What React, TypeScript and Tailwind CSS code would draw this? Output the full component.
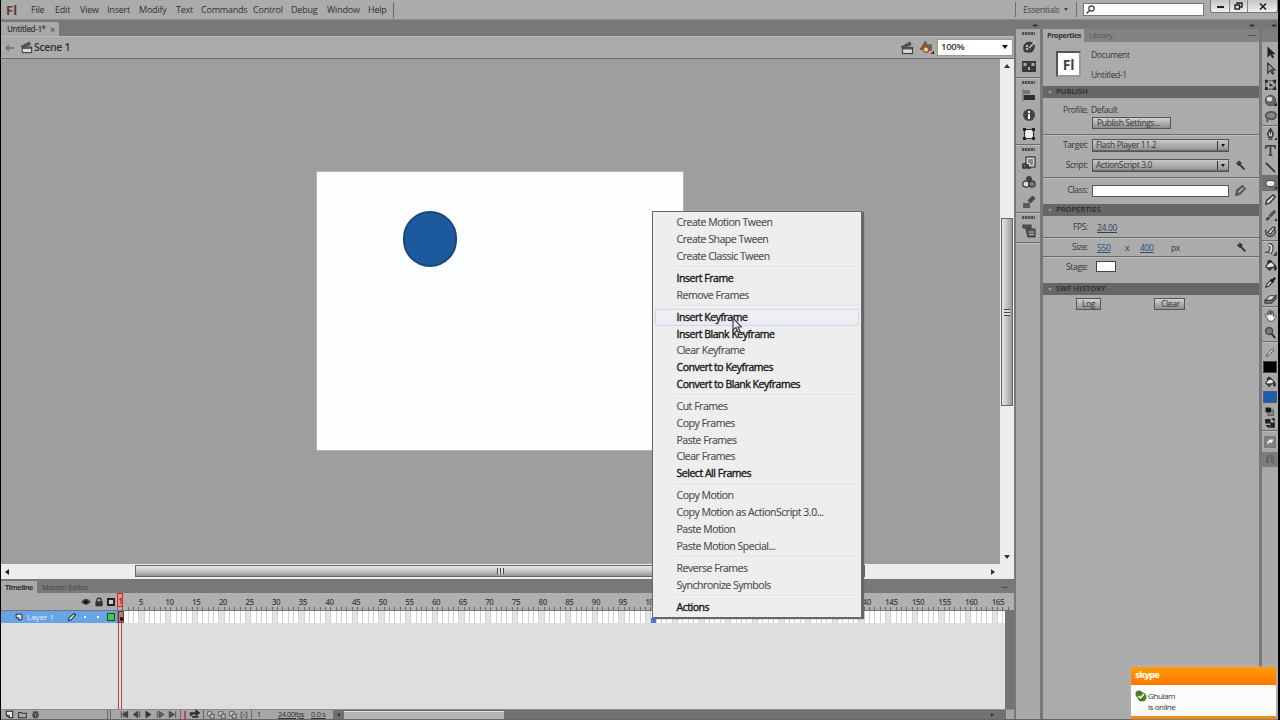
import { Fragment } from "react";
import type { ReactNode } from "react";

const MENUS = [
  { label: "File", w: "w-[24px]" },
  { label: "Edit", w: "w-[25px]" },
  { label: "View", w: "w-[27px]" },
  { label: "Insert", w: "w-[32px]" },
  { label: "Modify", w: "w-[37px]" },
  { label: "Text", w: "w-[25px]" },
  { label: "Commands", w: "w-[52px]" },
  { label: "Control", w: "w-[38px]" },
  { label: "Debug", w: "w-[36px]" },
  { label: "Window", w: "w-[41px]" },
  { label: "Help", w: "w-[25px]" },
];

type MenuEntry = { label: string; off?: boolean; hover?: boolean };

const CONTEXT_GROUPS: MenuEntry[][] = [
  [
    { label: "Create Motion Tween", off: true },
    { label: "Create Shape Tween", off: true },
    { label: "Create Classic Tween", off: true },
  ],
  [{ label: "Insert Frame" }, { label: "Remove Frames", off: true }],
  [
    { label: "Insert Keyframe", hover: true },
    { label: "Insert Blank Keyframe" },
    { label: "Clear Keyframe", off: true },
    { label: "Convert to Keyframes" },
    { label: "Convert to Blank Keyframes" },
  ],
  [
    { label: "Cut Frames", off: true },
    { label: "Copy Frames", off: true },
    { label: "Paste Frames", off: true },
    { label: "Clear Frames", off: true },
    { label: "Select All Frames" },
  ],
  [
    { label: "Copy Motion", off: true },
    { label: "Copy Motion as ActionScript 3.0...", off: true },
    { label: "Paste Motion", off: true },
    { label: "Paste Motion Special...", off: true },
  ],
  [
    { label: "Reverse Frames", off: true },
    { label: "Synchronize Symbols", off: true },
  ],
  [{ label: "Actions" }],
];

const FRAME_LABELS = Array.from({ length: 33 }, (_, i) => (i + 1) * 5);

const Icon = ({ children, size = 13 }: { children: ReactNode; size?: number }) => (
  <svg width={size} height={size} viewBox="0 0 14 14" fill="none" stroke="#333" strokeWidth="1.2" className="shrink-0">
    {children}
  </svg>
);

const icons: Record<string, ReactNode> = {
  select: <path d="M4 1v11l3-3 2 4 1.500-1-2-3.500h3.500z" fill="#222" stroke="#222" strokeWidth=".5" />,
  subselect: <path d="M4 1v11l3-3 2 4 1.500-1-2-3.500h3.500z" fill="#999" stroke="#333" />,
  transform: (
    <>
      <rect x="2" y="3" width="10" height="9" strokeDasharray="2 1" />
      <path d="M1 2h3v3h-3zM10 2h3v3h-3zM1 10h3v3h-3zM10 10h3v3h-3z" fill="#222" stroke="none" />
      <path d="M6 5l4 4h-4z" fill="#222" stroke="none" />
    </>
  ),
  ball: (
    <>
      <circle cx="7" cy="7" r="5.500" fill="#666" stroke="#555" />
      <ellipse cx="6" cy="5.500" rx="3" ry="2.500" fill="#ddd" stroke="none" />
      <path d="M10 13h4v-4z" fill="#222" stroke="none" />
    </>
  ),
  lasso: (
    <>
      <path d="M3 9C0 5 4 2 8 2s6 3 4 6-6 2-7 1-2 2-1 4" strokeWidth="2" stroke="#555" fill="#888" />
    </>
  ),
  pen: (
    <>
      <path d="M7 1l3 5-1.500 4h-3L4 6z" fill="#ddd" strokeWidth="1.600" />
      <path d="M7 2v5M5 12h4" />
      <path d="M11 13h3v-3z" fill="#222" stroke="none" />
    </>
  ),
  type: <path d="M2 2h10v3M2 2v3M7 2v10M5 12h4" strokeWidth="2" stroke="#444" />,
  line: <path d="M2 2l10 10" strokeWidth="1.800" />,
  oval: (
    <>
      <ellipse cx="7" cy="7" rx="5" ry="3.500" fill="#e8e8e8" stroke="#444" />
      <path d="M11 13h3v-3z" fill="#222" stroke="none" />
    </>
  ),
  pencil: <path d="M2 12l1-4 7-6 2 2-6 7z" fill="#ddd" strokeWidth="1.500" />,
  brush: (
    <>
      <path d="M12 2L6 8" strokeWidth="3.500" stroke="#555" />
      <path d="M2 12c0-3 2-4 4-4 1 3-1 5-4 4z" fill="#444" stroke="none" />
      <path d="M11 13h3v-3z" fill="#222" stroke="none" />
    </>
  ),
  deco: (
    <>
      <path d="M2 5c-1 5 2 8 6 7s5-5 3-8" strokeWidth="2" stroke="#555" />
      <path d="M4 8l6-6 2 1-5 7z" fill="#ddd" />
    </>
  ),
  bone: (
    <>
      <path d="M5 2c4 0 4 5 1 9" strokeWidth="4.500" stroke="#444" />
      <path d="M5 2c4 0 4 5 1 9" strokeWidth="2" stroke="#ddd" />
      <path d="M1 10h5M11 13h3v-3z" />
    </>
  ),
  bucket: (
    <>
      <path d="M2 8l5-6 5 5-6 5z" fill="#e8e8e8" />
      <path d="M4 5C3 1 8 0 8 4M12 7c2 3 1 5 0 5s-1-3 0-5" fill="#333" />
      <path d="M2 9l9-1-5 5z" fill="#444" stroke="none" />
    </>
  ),
  dropper: (
    <>
      <path d="M2 12l1-3 5-5 2 2-5 5z" fill="#ddd" />
      <path d="M7 4l3 3M9 5l3-3" strokeWidth="2.600" stroke="#222" />
    </>
  ),
  eraser: (
    <>
      <path d="M1 9l5-5h7l-5 5z" fill="#ddd" stroke="#444" />
      <path d="M1 9v3h7l5-5V4L8 9z" fill="#777" stroke="#444" />
    </>
  ),
  hand: <path d="M3 8L1 5l1-1 2 2V2h1.500v3V1H7v4V1h1.500v4V2H10v5l2-2 1 1-3 6H5z" fill="#f4f4f4" strokeWidth=".8" />,
  zoom: (
    <>
      <circle cx="5.500" cy="5.500" r="3.800" fill="#777" stroke="#444" />
      <path d="M8 8l4 5" strokeWidth="2.200" />
    </>
  ),
  smallPencil: <path d="M3 11l1-3 6-6 1.500 1.500-6 6z" fill="#eee" strokeWidth="1" />,
  swap: <path d="M2 3h5v4H2zM8 7h4v5H8zM9 2h3v3M2 10h4v3" fill="#222" stroke="#222" />,
  bw: (
    <>
      <rect x="5" y="5" width="7" height="7" fill="#888" stroke="#555" />
      <rect x="2" y="2" width="7" height="6" fill="#111" stroke="none" />
    </>
  ),
  objDraw: (
    <>
      <rect x="1" y="1" width="12" height="12" fill="#858585" stroke="#6a6a6a" />
      <path d="M4 10V7l3-3h4L9 8H6z" fill="#f2f2f2" stroke="none" />
    </>
  ),
  snap: <path d="M3 12V6c0-5 8-5 8 0v6M5 12V6c0-2 4-2 4 0v6" stroke="#5c5c5c" />,
  palette: (
    <>
      <path d="M2 9C1 4 6 1 10 3s2 9-3 9-5-1-5-3z" fill="#444" stroke="#333" />
      <circle cx="5" cy="6" r="1" fill="#ddd" stroke="none" />
      <circle cx="5" cy="9" r="1" fill="#ddd" stroke="none" />
      <path d="M7 8l6-6" stroke="#ccc" />
    </>
  ),
  swatches: (
    <>
      <rect x="0" y="2" width="14" height="11" fill="#3a3a3a" stroke="none" />
      <path d="M1.500 4h3v3h-3zM6 8h2v3H6zM9.500 4h3v3h-3z" fill="#aaa" stroke="none" />
    </>
  ),
  align: (
    <>
      <path d="M1 1v12" stroke="#666" />
      <path d="M2 2h6v4H2z" fill="#777" stroke="none" />
      <path d="M2 7h11v5H2z" fill="#2d2d2d" stroke="none" />
    </>
  ),
  info: (
    <>
      <circle cx="7" cy="7" r="6" fill="#444" stroke="none" />
      <path d="M7 3v2M7 6v5" stroke="#fff" strokeWidth="2" />
    </>
  ),
  box: (
    <>
      <path d="M2.500 2.500h9v9h-9z" fill="#eee" />
      <path d="M1 1h3v3H1zM10 1h3v3h-3zM1 10h3v3H1zM10 10h3v3h-3z" fill="#222" stroke="none" />
    </>
  ),
  code: (
    <>
      <rect x="4" y="1" width="9" height="10" fill="#ddd" />
      <path d="M6 4h5M6 6h5M8 8h3" />
      <path d="M1 8h3v4H1zM6 8v4h3" fill="#777" strokeWidth="1.600" />
    </>
  ),
  component: (
    <>
      <circle cx="7" cy="4" r="3" fill="#444" stroke="none" />
      <circle cx="4" cy="9" r="3.200" fill="#ddd" stroke="#333" />
      <circle cx="10" cy="9" r="3.200" fill="#777" stroke="#333" />
    </>
  ),
  preset: (
    <>
      <path d="M7 7l5-5" strokeWidth="4.500" stroke="#4a4a4a" />
      <path d="M1 8h7v5H1z" fill="#5a5a5a" stroke="none" />
    </>
  ),
  project: (
    <>
      <path d="M1 1h8v3H1zM4 5h9v8H6z" fill="#555" stroke="#444" />
      <path d="M7 8h5M7 10.500h5" stroke="#bbb" />
    </>
  ),
  wrench: (
    <>
      <path d="M5 5l7 7" strokeWidth="2.400" />
      <path d="M2 3.500L5 6l2-2L4 1.500" strokeWidth="2.400" />
    </>
  ),
  edit: (
    <>
      <path d="M2 12l1-5 6-5 3 3-6 6z" fill="#666" stroke="#555" strokeWidth="1.600" />
      <path d="M5 9l5-5" stroke="#ccc" />
    </>
  ),
  clapper: (
    <>
      <path d="M1 6l9-5 1 3-8 2.500z" fill="#55583a" stroke="#444" strokeWidth=".8" />
      <rect x="2.500" y="6.500" width="10" height="6" fill="#ddd" stroke="#444" />
      <path d="M3 7.500h9" strokeWidth="2" stroke="#555" />
    </>
  ),
  symbols: (
    <>
      <path d="M1 9l5-8 3 6z" fill="#5d6a3e" stroke="#444" strokeWidth=".6" />
      <rect x="7" y="4" width="5" height="6" fill="#6e6346" stroke="none" />
      <circle cx="6.500" cy="9" r="2.600" fill="#e9d08c" stroke="#b5452a" />
      <path d="M11 13h3v-3z" fill="#222" stroke="none" />
    </>
  ),
  eye: (
    <>
      <path d="M1 7c3-5 9-5 12 0-3 4-9 4-12 0z" fill="#444" />
      <circle cx="7" cy="7" r="2.500" fill="#111" stroke="none" />
    </>
  ),
  lock: (
    <>
      <path d="M4 7V4c0-3 6-3 6 0v3" strokeWidth="1.800" />
      <rect x="2" y="6" width="10" height="7" fill="#333" stroke="none" />
    </>
  ),
  page: (
    <>
      <path d="M2 2h10v10H7l-5-4z" fill="#e8e8e8" stroke="#222" strokeWidth="1.600" />
      <path d="M2 8h5v4" stroke="#222" />
    </>
  ),
  folder: <path d="M1 4h4l1 1h7v7H1z" fill="#aaa" strokeWidth="1.600" />,
  trash: (
    <>
      <circle cx="7" cy="8" r="4.500" fill="#777" />
      <path d="M3 3h8M5 6v5M9 6v5" strokeWidth="1.600" />
    </>
  ),
  first: <path d="M2 2v10M12 2v10L4 7zM6 2v10" fill="#444" />,
  prev: <path d="M9 2v10L2 7zM12 2v10" fill="#444" />,
  play: <path d="M3 2v10l8-5z" fill="#333" />,
  next: <path d="M2 2v10M5 2v10l7-5z" fill="#666" />,
  last: <path d="M2 2v10l8-5zM12 2v10" fill="#555" />,
  loop: <path d="M2 9V5h9M9 2l4 3-4 3zM4 10h8" fill="#444" strokeWidth="2" />,
  onion: (
    <>
      <rect x="1.500" y="1.500" width="7" height="7" fill="#ddd" />
      <rect x="5.500" y="5.500" width="7" height="7" fill="#bbb" />
    </>
  ),
  markers: <path d="M5 2H2v10h3M9 2h3v10H9M7 5v4" />,
};

const Gripper = () => (
  <div className="h-[3px] w-[13px] bg-[repeating-linear-gradient(90deg,#4e4e4e_0_2px,#8a8a8a_2px_3px)]" />
);

const Rule = () => <div className="h-[2px] w-full shrink-0 border-t border-[#6c6c6c] bg-[#bcbcbc]" />;

const MenuBar = () => (
  <div className="flex h-5 items-center border-b border-[#8a8a8a] bg-[#ababab] text-[9px] font-medium tracking-[-0.2px] text-[#303030]">
    <div className="w-[30px] pl-[5px] text-[13px] font-bold leading-5 tracking-normal text-[#5a3c3c]">Fl</div>
    {MENUS.map((m) => (
      <div key={m.label} className={`${m.w} whitespace-nowrap pt-px`}>
        {m.label}
      </div>
    ))}
    <div className="h-4 w-px bg-[#666]" />
    <div className="ml-auto flex h-full items-center">
      <div className="h-[15px] w-px bg-[#6e6e6e]" />
      <div className="w-[48px] pl-[7px] tracking-[-0.5px] text-[#4c4c4c]">Essentials</div>
      <div className="h-0 w-0 border-x-[2px] border-t-[3px] border-x-transparent border-t-[#444]" />
      <div className="ml-[8px] h-[15px] w-px bg-[#6e6e6e]" />
      <div className="ml-[6px] flex h-[13px] w-[121px] items-center border border-[#777] bg-white pl-[2px]">
        <svg width="9" height="9" viewBox="0 0 9 9" fill="none" stroke="#333" strokeWidth="1.200">
          <circle cx="5.500" cy="3.500" r="2.700" />
          <path d="M3.500 5.500L.5 8.500" />
        </svg>
      </div>
      <div className="ml-[6px] flex h-[13px] w-[68px] self-start rounded-b-[3px] border border-t-0 border-[#777] bg-gradient-to-b from-[#c4c4c4] to-[#f0f0f0]">
        <div className="flex w-[19px] items-center justify-center border-r border-[#888]">
          <div className="mt-[2px] h-[2px] w-[7px] bg-[#222]" />
        </div>
        <div className="flex w-[18px] items-center justify-center border-r border-[#888]">
          <svg width="9" height="8" viewBox="0 0 9 8" fill="none" stroke="#222" strokeWidth="1.400">
            <path d="M3 3V1h5v4H6" />
            <rect x="1" y="3" width="4.500" height="4" />
          </svg>
        </div>
        <div className="flex grow items-center justify-center">
          <svg width="8" height="7" viewBox="0 0 8 7" stroke="#222" strokeWidth="1.600">
            <path d="M1 .5l6 6M7 .5l-6 6" />
          </svg>
        </div>
      </div>
    </div>
  </div>
);

const SceneBar = () => (
  <>
    <div className="flex h-4 items-end bg-[#787878]">
      <div className="flex h-[14px] w-[58px] items-center whitespace-nowrap rounded-tr-[2px] bg-[#a9a9a9] pl-[6px] text-[8px] font-semibold leading-none tracking-[-0.4px] text-[#3a3a3a]">
        <span className="w-[40px]">Untitled-1*</span>
        <span className="pl-[3px] text-[9px] font-normal">×</span>
      </div>
    </div>
    <div className="flex h-[23px] items-center border-b border-t border-b-[#6c6c6c] border-t-[#b9b9b9] bg-[#ababab]">
      <svg width="9" height="8" viewBox="0 0 9 8" className="ml-[4px]">
        <path d="M0 4l4-4v3h5v2H4v3z" fill="#777" />
      </svg>
      <div className="ml-[6px] flex">
        <Icon>{icons.clapper}</Icon>
      </div>
      <div className="ml-px text-[10.5px] font-semibold tracking-[-0.35px] text-[#333]">Scene 1</div>
      <div className="ml-auto flex items-center">
        <Icon size={14}>{icons.clapper}</Icon>
        <div className="w-[5px]" />
        <Icon size={15}>{icons.symbols}</Icon>
        <div className="ml-[3px] flex h-[17px] w-[76px] items-center justify-between border border-[#999] bg-white pb-px pl-[3px] pr-[4px] text-[9.5px] font-semibold tracking-[-0.3px] text-[#333]">
          <span>100%</span>
          <span className="h-0 w-0 border-x-[3px] border-t-4 border-x-transparent border-t-[#111]" />
        </div>
        <div className="w-px" />
      </div>
    </div>
  </>
);

const Stage = () => (
  <div className="flex h-[505px]">
    <div className="grow bg-[#9e9e9e] pl-[315px] pt-[112px]">
      <div className="h-[280px] w-[368px] border border-[#b4b4b4] bg-[#fdfeff] pl-[86px] pt-[39px]">
        <div className="h-[56px] w-[54px] rounded-full border-2 border-[#1c4679] bg-[#1d5a9d]" />
      </div>
    </div>
    <div className="flex w-[14px] flex-col items-center bg-[#ededed]">
      <div className="mt-[5px] h-0 w-0 border-x-[3px] border-b-4 border-x-transparent border-b-[#333]" />
      <div className="mt-[150px] flex h-[188px] w-[12px] items-center justify-center border border-[#666] bg-gradient-to-r from-[#e6e6e6] via-[#c2c2c2] to-[#979797]">
        <div className="h-[7px] w-[6px] bg-[repeating-linear-gradient(180deg,#444_0_1px,#ddd_1px_3px)]" />
      </div>
      <div className="mt-[149px] h-0 w-0 border-x-[3px] border-t-4 border-x-transparent border-t-[#333]" />
    </div>
  </div>
);

const HScroll = () => (
  <div className="flex h-[15px] items-start bg-[#ededed]">
    <div className="ml-[4px] mt-[5px] h-0 w-0 border-y-[3px] border-r-4 border-y-transparent border-r-[#222]" />
    <div className="ml-[126px] mt-px flex h-[12px] w-[730px] items-center justify-center border border-[#666] bg-gradient-to-b from-[#e8e8e8] via-[#c9c9c9] to-[#949494]">
      <div className="h-[6px] w-[7px] bg-[repeating-linear-gradient(90deg,#444_0_1px,#ddd_1px_3px)]" />
    </div>
    <div className="ml-[126px] mt-[5px] h-0 w-0 border-y-[3px] border-l-4 border-y-transparent border-l-[#333]" />
  </div>
);

const TimelineHeader = () => (
  <div className="flex h-[18px] border-b border-[#777] bg-[#ababab]">
    <div className="flex w-[116px] items-center justify-end gap-[3px] pr-px">
      <Icon size={10}>{icons.eye}</Icon>
      <Icon size={10}>{icons.lock}</Icon>
      <div className="h-[8px] w-[8px] border-2 border-[#222] bg-[#ccc]" />
    </div>
    <div className="flex grow flex-col overflow-hidden bg-[#b0b0b0]">
      <div className="flex h-[14px] items-end whitespace-nowrap pl-px text-[8px] font-semibold leading-[11px] tracking-[-0.4px] text-[#444]">
        <div className="flex w-[21.333px] shrink-0">
          <div className="flex h-[14px] w-[6px] items-end justify-center border border-[#c62d2d] bg-[#f08c84] text-[#8c1a1a]">1</div>
        </div>
        {FRAME_LABELS.map((n) => (
          <div key={n} className="w-[26.667px] shrink-0">
            {/* 105-135 sit entirely behind the open menu */}
            {n > 100 && n < 140 ? null : n}
          </div>
        ))}
      </div>
      <div className="ml-px h-[3px] bg-[repeating-linear-gradient(90deg,#666_0_1px,transparent_1px_5.333px)]" />
    </div>
    <div className="w-px" />
  </div>
);

const LayerRow = () => (
  <div className="flex h-[12px]">
    <div className="flex w-[116px] items-center bg-[#67a4e6] text-[8px] leading-none text-[#e6f3ff]">
      <div className="ml-[14px] flex">
        <Icon size={8}>{icons.page}</Icon>
      </div>
      <span className="ml-[4px] w-[40px]">Layer 1</span>
      <Icon size={10}>{icons.pencil}</Icon>
      <span className="ml-[7px] h-[2px] w-[2px] bg-white" />
      <span className="ml-[11px] h-[2px] w-[2px] bg-white" />
      <span className="ml-[8px] h-[8px] w-[8px] border border-[#1d4a1d] bg-[#4ac44a]" />
    </div>
    <div className="ml-px flex w-[887px] bg-[repeating-linear-gradient(90deg,transparent_0_4.333px,#d2d2d2_4.333px_5.333px),repeating-linear-gradient(90deg,#fff_0_21.333px,#e4e4e4_21.333px_26.667px)]">
      <div className="flex h-full w-[6px] items-end justify-center border border-[#7c3030] bg-[#ae7e7c] pb-px">
        <div className="h-[4px] w-[3px] rounded-full bg-black" />
      </div>
      {/* selected frame peeks out under the menu corner */}
      <div className="ml-[527px] h-[5px] w-[5px] self-end bg-[#3a80cc]" />
    </div>
    <div className="grow bg-[#747474]" />
  </div>
);

const TimelineFooter = () => (
  <div className="flex h-[10px] items-center border-t border-[#8c8c8c] bg-[#a6a6a6] text-[7.5px] tracking-[-0.3px] text-[#333]">
    <div className="flex w-[110px] items-center gap-[4px] pl-[4px]">
      <Icon size={9}>{icons.page}</Icon>
      <Icon size={9}>{icons.folder}</Icon>
      <Icon size={9}>{icons.trash}</Icon>
      <span className="ml-auto h-[9px] w-[4px] border-x border-[#666]" />
    </div>
    <div className="flex items-center gap-[3px] pl-[9px]">
      <Icon size={9}>{icons.first}</Icon>
      <Icon size={9}>{icons.prev}</Icon>
      <Icon size={9}>{icons.play}</Icon>
      <Icon size={9}>{icons.next}</Icon>
      <Icon size={9}>{icons.last}</Icon>
      <span className="h-[9px] w-px bg-[#666]" />
      <span className="h-[8px] w-[2px] bg-[#c34a4a]" />
      <Icon size={11}>{icons.loop}</Icon>
      <span className="h-[9px] w-px bg-[#666]" />
      <Icon size={8}>{icons.onion}</Icon>
      <Icon size={8}>{icons.onion}</Icon>
      <Icon size={8}>{icons.onion}</Icon>
      <Icon size={8}>{icons.markers}</Icon>
      <span className="h-[9px] w-px bg-[#666]" />
    </div>
    <span className="ml-[5px] w-[21px] leading-[9px]">1</span>
    <span className="w-[33px] whitespace-nowrap leading-[9px] tracking-[-0.5px] underline">24.00fps</span>
    <span className="w-[22px] whitespace-nowrap leading-[9px] underline">0.0 s</span>
    <div className="flex h-full grow items-center bg-[#717171]">
      <span className="ml-[4px] h-0 w-0 border-y-2 border-r-[3px] border-y-transparent border-r-[#333]" />
      <div className="ml-[4px] h-[8px] w-[160px] border-t border-[#ddd] bg-[#b4b4b4]" />
      <span className="ml-auto mr-[12px] h-0 w-0 border-y-2 border-l-[3px] border-y-transparent border-l-[#333]" />
    </div>
    <div className="h-full w-[8px] bg-[#a6a6a6]" />
  </div>
);

const Timeline = () => (
  <div className="flex grow flex-col bg-[#787878]">
    <div className="flex h-[14px] items-end text-[7.5px] leading-none">
      <div className="flex h-[12px] w-[36px] items-center bg-[#a9a9a9] pl-[4px] pt-px font-bold tracking-[-0.55px] text-[#333]">Timeline</div>
      <div className="flex h-[12px] items-center pl-[5px] pt-px tracking-[-0.1px] text-[#444]">Motion Editor</div>
      <div className="mb-[5px] ml-auto mr-[6px] h-px w-[6px] bg-[#4a4a4a]" />
    </div>
    <TimelineHeader />
    <LayerRow />
    <div className="flex grow">
      <div className="flex w-[1004px] bg-[#dedede]">
        <div className="ml-[117px] w-[4px] border-x border-[#a3504c]" />
      </div>
      <div className="grow bg-[#747474]" />
    </div>
    <TimelineFooter />
  </div>
);

const DOCK = [
  ["palette", "swatches"],
  ["align", "info", "box"],
  ["code", "component", "preset"],
  ["project"],
];

const IconDock = () => (
  <div className="flex w-[24px] flex-col bg-[#a9a9a9] pt-px">
    {DOCK.map((group, i) => (
      <Fragment key={i}>
        <div className="flex flex-col items-center pt-[2px]">
          <Gripper />
          {group.map((name) => (
            <div key={name} className="flex h-[19.300px] items-center pl-[2px] pt-[4px]">
              <Icon size={14}>{icons[name]}</Icon>
            </div>
          ))}
          <div className="h-[3px]" />
        </div>
        <Rule />
      </Fragment>
    ))}
  </div>
);

const SectionHeader = ({ title }: { title: string }) => (
  <div className="flex h-[12px] items-center bg-[#666] pl-[5px] text-[7.5px] font-semibold tracking-[0.1px] text-[#2a2a2a]">
    <span className="mr-[4px] h-0 w-0 border-x-2 border-t-[3px] border-x-transparent border-t-[#999]" />
    {title}
  </div>
);

const Label = ({ children }: { children: ReactNode }) => (
  <span className="w-[46px] shrink-0 whitespace-nowrap pr-px text-right">{children}</span>
);

const Dropdown = ({ value }: { value: string }) => (
  <div className="ml-[3px] flex h-[13px] w-[137px] items-center border border-[#555] bg-gradient-to-b from-[#c9c9c9] to-[#8f8f8f] pl-[3px] shadow-[inset_0_-1px_0_#666]">
    <span className="grow whitespace-nowrap leading-none">{value}</span>
    <span className="flex h-[9px] w-[11px] items-center justify-center border-l border-[#333]">
      <span className="h-0 w-0 border-x-[2.500px] border-t-[3.500px] border-x-transparent border-t-[#111]" />
    </span>
  </div>
);

const BUTTON =
  "flex h-[12px] items-center border border-[#555] bg-gradient-to-b from-[#d2d2d2] to-[#8d8d8d] leading-none";

const PropertiesPanel = () => (
  <div className="flex w-[216px] flex-col bg-[#ababab] text-[8.5px] font-medium tracking-[-0.35px] text-[#363636]">
    <div className="flex h-[13px] items-center bg-[#838383] text-[7.5px]">
      <div className="flex h-full w-[41px] items-center bg-[#ababab] pl-[4px] pt-px font-bold tracking-[-0.5px]">Properties</div>
      <span className="pl-[5px] tracking-[-0.1px] text-[#555]">Library</span>
      <span className="ml-auto mr-[3px] h-px w-[8px] bg-[#555]" />
    </div>
    <div className="flex h-[44px]">
      <div className="ml-[13px] mt-[9px] flex h-[26px] w-[25px] items-center justify-center border-2 border-[#555] border-b-[#999] border-r-[#999] bg-white text-[14px] font-bold text-[#444]">
        Fl
      </div>
      <div className="ml-[10px] flex flex-col pt-[5px]">
        <span className="h-[20px] leading-[15px]">Document</span>
        <span className="leading-[16px]">Untitled-1</span>
      </div>
    </div>
    <SectionHeader title="PUBLISH" />
    <div className="flex h-[36px] flex-col pt-[6px]">
      <div className="flex leading-[12px]">
        <Label>Profile:</Label>
        <span className="ml-[2px]">Default</span>
      </div>
      <div className={`${BUTTON} ml-[49px] mt-px w-[79px] pl-[4px] pt-px`}>Publish Settings...</div>
    </div>
    <Rule />
    <div className="flex h-[41px] flex-col gap-[7px] pt-[3px]">
      <div className="flex items-center">
        <Label>Target:</Label>
        <Dropdown value="Flash Player 11.2" />
      </div>
      <div className="flex items-center">
        <Label>Script:</Label>
        <Dropdown value="ActionScript 3.0" />
        <div className="-my-1 ml-[6px]">
          <Icon size={11}>{icons.wrench}</Icon>
        </div>
      </div>
    </div>
    <Rule />
    <div className="flex h-[25px] items-center pb-[2px]">
      <Label>Class:</Label>
      <div className="ml-[3px] h-[12px] w-[137px] border border-[#555] bg-white" />
      <div className="ml-[5px]">
        <Icon size={13}>{icons.edit}</Icon>
      </div>
    </div>
    <SectionHeader title="PROPERTIES" />
    <div className="flex h-[21px] items-center pt-[2px]">
      <Label>FPS:</Label>
      <span className="ml-[8px] leading-[9px] text-[#2d3f55] underline">24.00</span>
    </div>
    <Rule />
    <div className="flex h-[17px] items-center">
      <Label>Size:</Label>
      <span className="ml-[8px] w-[28px] leading-[9px] text-[#2d4f7c] underline">550</span>
      <span className="w-[15px] leading-[9px]">x</span>
      <span className="w-[31px] leading-[9px] text-[#2d4f7c] underline">400</span>
      <span className="w-[65px] leading-[9px]">px</span>
      <Icon size={11}>{icons.wrench}</Icon>
    </div>
    <Rule />
    <div className="flex h-[25px] items-start pt-[3px]">
      <Label>Stage:</Label>
      <div className="ml-[7px] h-[11px] w-[20px] border border-[#444] bg-white" />
    </div>
    <SectionHeader title="SWF HISTORY" />
    <div className="flex pt-[3px]">
      <div className={`${BUTTON} ml-[33px] w-[25px] pl-[5px]`}>Log</div>
      <div className={`${BUTTON} ml-[53px] w-[31px] pl-[6px]`}>Clear</div>
    </div>
  </div>
);

const TOOLS = [
  ["select", "subselect", "transform", "ball", "lasso"],
  ["pen", "type", "line", "oval", "pencil", "brush", "deco"],
  ["bone", "bucket", "dropper", "eraser"],
  ["hand", "zoom"],
];

const ToolStrip = () => (
  <div className="flex w-[16px] flex-col items-center bg-[#a9a9a9]">
    <div className="h-[13px] w-full bg-[#7e7e7e]" />
    <div className="h-[2px]" />
    {TOOLS.map((group, i) => (
      <Fragment key={i}>
        {group.map((name) => (
          <div key={name} className={`flex h-[16.150px] w-full shrink-0 items-center justify-center ${name === "oval" ? "bg-[#727272]" : ""}`}>
            <Icon>{icons[name]}</Icon>
          </div>
        ))}
        <Rule />
      </Fragment>
    ))}
    <div className="mt-[3px] flex h-[15px] items-center">
      <Icon size={12}>{icons.smallPencil}</Icon>
    </div>
    <div className="h-[12px] w-[14px] border border-[#444] bg-black" />
    <div className="flex h-[18px] items-center">
      <Icon size={12}>{icons.bucket}</Icon>
    </div>
    <div className="h-[12px] w-[14px] border border-[#3a5f8c] bg-[#1d5ea6]" />
    <div className="mt-[3px] flex flex-col">
      <Icon size={11}>{icons.bw}</Icon>
      <Icon size={12}>{icons.swap}</Icon>
    </div>
    <div className="h-px" />
    <Rule />
    <div className="flex h-[20px] items-center">
      <Icon size={12}>{icons.objDraw}</Icon>
    </div>
    <div className="flex h-[15px] w-full items-center justify-center bg-[#7d7d7d]">
      <Icon size={12}>{icons.snap}</Icon>
    </div>
  </div>
);

const Collapse = () => <span className="text-[6px] leading-none tracking-[-1px] text-[#333]">◂◂</span>;

const ContextMenu = () => (
  <div className="absolute left-[652px] top-[211px] h-[407px] w-[210px] border border-[#686868] bg-[#eeeeee] px-[2px] pt-[2px] text-[10.5px] tracking-[-0.47px] shadow-[2px_1px_1px_#666]">
    {CONTEXT_GROUPS.map((group, i) => (
      <Fragment key={i}>
        {i > 0 && (
          <div className="flex h-[5.500px] items-center pl-[20px]">
            <div className="h-[2px] w-full border-t border-[#e2e2e2] bg-[#f6f6f6]" />
          </div>
        )}
        {group.map((item) => (
          <div
            key={item.label}
            className={`flex h-[16.750px] items-center whitespace-nowrap rounded-[2px] border pl-[20.500px] pt-px ${
              item.hover ? "border-[#cdd8e4] bg-gradient-to-b from-[#f2f2f4] to-[#e8ecf2]" : "border-transparent"
            } ${item.off ? "text-[#4e4e4e] [-webkit-text-stroke:0.15px_#4e4e4e]" : "text-[#1c1c1c] [-webkit-text-stroke:0.4px_#1c1c1c]"}`}
          >
            {item.label}
          </div>
        ))}
      </Fragment>
    ))}
  </div>
);

const Cursor = () => (
  <svg className="absolute left-[732px] top-[317px]" width="10" height="17" viewBox="0 0 10 17">
    <path d="M1 1v12l3-2.500L6 15l2-1-2-4h3.500z" fill="#e4e6ea" stroke="#3d4856" strokeWidth="1.200" />
  </svg>
);

const SkypeToast = () => (
  <div className="absolute left-[1131px] top-[667px] flex h-[52px] w-[145px] flex-col bg-[#fbfbfb] text-[8px] font-medium tracking-[-0.4px] text-[#333] shadow-[0_0_3px_#bbb]">
    <div className="h-[18px] bg-gradient-to-b from-[#ff9c06] to-[#ff7600] pl-[4px] text-[9.5px] font-extrabold leading-[16px] tracking-[-1px] text-[#fff3d6]">
      skype
    </div>
    <div className="flex grow pt-[5px]">
      <svg width="12" height="12" viewBox="0 0 12 12" className="ml-[4px]">
        <circle cx="4" cy="4" r="3.500" fill="#4d7d22" />
        <circle cx="7" cy="7" r="4.500" fill="#4d7d22" />
        <path d="M3.500 6l2 2 3.500-4" fill="none" stroke="#fff" strokeWidth="1.500" />
      </svg>
      <div className="ml-px flex flex-col leading-[11px]">
        <span>Ghulam</span>
        <span>is online</span>
      </div>
    </div>
    <div className="h-[3px] bg-[#f28a12]" />
  </div>
);

const App = () => {
  return (
    <div className="relative h-[720px] w-[1280px] overflow-hidden border-l border-r-2 border-black bg-[#787878] font-['Open_Sans','Noto_Sans',sans-serif]">
      <MenuBar />
      <div className="flex h-[699px]">
        <div className="flex w-[1013px] flex-col">
          <SceneBar />
          <Stage />
          <HScroll />
          <Timeline />
        </div>
        <div className="flex grow flex-col">
          <div className="flex h-[9px] items-center">
            <span className="ml-[18px] flex w-[217px]">
              <Collapse />
            </span>
            <span className="flex w-[22px]">
              <Collapse />
            </span>
            <Collapse />
          </div>
          <div className="flex grow justify-between pl-[2px]">
            <IconDock />
            <PropertiesPanel />
            <ToolStrip />
          </div>
        </div>
      </div>
      <div className="h-px bg-[#666]" />
      {/* overlays, shifted by the 1px window edge */}
      <div className="absolute -left-px top-0">
        <ContextMenu />
        <Cursor />
        <SkypeToast />
      </div>
    </div>
  );
};

export default App;
